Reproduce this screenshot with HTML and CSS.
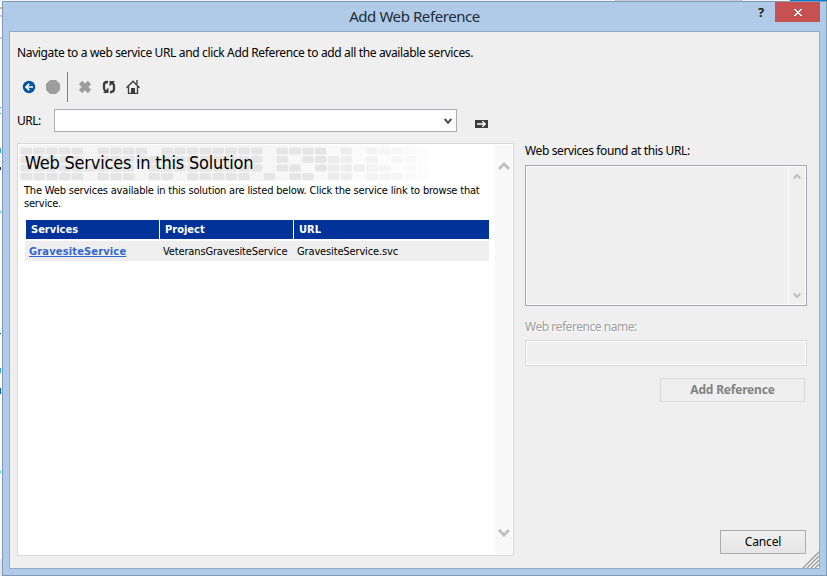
FILE: index.html
```html
<!DOCTYPE html>
<html lang="en">
<head>
    <meta charset="UTF-8">
    <meta name="viewport" content="width=device-width, initial-scale=1.0">
    <title>Add Web Reference</title>
    <link rel="stylesheet" href="styles.css">
</head>
<body>
    <div class="dialog">
        <div class="title-bar">
            <h1 class="title">Add Web Reference</h1>
            <div class="window-buttons">
                <button class="help-button">?</button>
                <button class="close-button">
                    <svg width="8" height="7" viewBox="0 0 8 7" shape-rendering="crispEdges"><path d="M0 0h2v1h1v1h2V1h1V0h2v1H7v1H6v1H5v1h1v1h1v1h1v1H6V6H5V5H3v1H2v1H0V6h1V5h1V4h1V3H2V2H1V1H0z" fill="#fff"/></svg>
                </button>
            </div>
        </div>

        <div class="content">
            <p class="intro">Navigate to a web service URL and click Add Reference to add all the available services.</p>

            <div class="toolbar">
                <svg class="icon" width="14" height="14" viewBox="0 0 14 14"><circle cx="7" cy="7" r="6.2" fill="#0054a0"/><path d="M11 7H4M7.2 3.8L4 7l3.2 3.2" fill="none" stroke="#fff" stroke-width="1.7"/></svg>
                <svg class="icon" width="14" height="14" viewBox="0 0 14 14"><path d="M4 0h6l4 4v6l-4 4H4l-4-4V4z" fill="#9d9d9d"/></svg>
                <span class="separator"></span>
                <svg class="icon" width="14" height="14" viewBox="0 0 14 14"><path d="M2.500 2.500l9 9M11.500 2.500l-9 9" stroke="#9d9d9d" stroke-width="4.600"/></svg>
                <svg class="icon" width="14" height="14" viewBox="0 0 14 14"><path d="M6 2H4.500Q2 2.500 2 5v3.500Q2.200 10.500 4.500 11.500M8 12h1.500Q12 11.500 12 9V5.500Q11.800 3.500 9.500 2.500" fill="none" stroke="#3c3c3c" stroke-width="2.300"/><path d="M1 13h5.500V7.500zM13 1H7.500v5.500z" fill="#3c3c3c"/></svg>
                <svg class="icon" width="14" height="14" viewBox="0 0 14 14"><path d="M.5 7.800L7 1.200l6.500 6.600M2.500 6v7.500h9V6M11 0v4" fill="none" stroke="#3c3c3c" stroke-width="1.300"/><path d="M5 8h4v6H5z" fill="#3c3c3c"/></svg>
            </div>

            <div class="url-row">
                <label class="url-label">URL:</label>
                <div class="url-box">
                    <svg width="8" height="7" viewBox="0 0 8 7"><path d="M.7 1L4 4.800 7.300 1" fill="none" stroke="#4a4a4a" stroke-width="2"/></svg>
                </div>
                <svg class="go" width="13" height="8" viewBox="0 0 13 8"><path d="M0 0h13v8H0z" fill="#3c3c3c"/><path d="M2 4h8M7.300 1.200L10.200 4 7.300 6.800" fill="none" stroke="#fff" stroke-width="1.400"/></svg>
            </div>

            <div class="columns">
                <div class="browser">
                    <div class="page">
                        <div class="banner">
                            <svg class="tiles" width="474" height="36"></svg>
                            <h2 class="banner-title">Web Services in this Solution</h2>
                        </div>
                        <p class="description">The Web services available in this solution are listed below. Click the service link to browse that service.</p>
                        <table class="services">
                            <thead>
                                <tr>
                                    <th class="col-service">Services</th>
                                    <th class="col-project">Project</th>
                                    <th>URL</th>
                                </tr>
                            </thead>
                            <tbody>
                                <tr>
                                    <td><a href="#">GravesiteService</a></td>
                                    <td>VeteransGravesiteService</td>
                                    <td>GravesiteService.svc</td>
                                </tr>
                            </tbody>
                        </table>
                    </div>
                    <div class="scrollbar">
                        <svg width="12" height="10" viewBox="0 0 12 10"><path d="M1 8l5-5 5 5" fill="none" stroke="#bfbfbf" stroke-width="2.800"/></svg>
                        <svg width="12" height="10" viewBox="0 0 12 10"><path d="M1 2l5 5 5-5" fill="none" stroke="#bfbfbf" stroke-width="2.800"/></svg>
                    </div>
                </div>

                <div class="side">
                    <label class="found-label">Web services found at this URL:</label>
                    <div class="found-list">
                        <div class="list-scroll">
                            <svg width="8" height="7" viewBox="0 0 8 7"><path d="M.7 5.500L4 2l3.300 3.500" fill="none" stroke="#bfbfbf" stroke-width="2"/></svg>
                            <svg width="8" height="7" viewBox="0 0 8 7"><path d="M.7 1.500L4 5l3.300-3.500" fill="none" stroke="#bfbfbf" stroke-width="2"/></svg>
                        </div>
                    </div>
                    <label class="name-label">Web reference name:</label>
                    <div class="name-box"></div>
                    <button class="add-button" disabled>Add Reference</button>
                    <button class="cancel-button">Cancel</button>
                </div>
            </div>
            <svg class="grip" width="17" height="17" viewBox="0 0 17 17"><path d="M0 17L17 0v17z" fill="#fff"/><path d="M1 17L17 1M5 17L17 5M9 17L17 9M13 17l4-4" stroke="#999" stroke-width="1.500"/></svg>
        </div>
    </div>

    <script>
        // Rounded tiles behind the page heading, fading out to the right
        const tiles = document.querySelector('.tiles');
        const gaps = [
            [5, 10, 19, 24, 26],
            [5, 19, 21, 26, 28],
            [9, 19, 22, 29],
            [5, 9, 12, 18, 20, 23, 26]
        ];

        for (let row = 0; row < 4; row++) {
            for (let col = 0; col < 32; col++) {
                if (gaps[row].includes(col)) continue;
                const rect = document.createElementNS('http://www.w3.org/2000/svg', 'rect');
                rect.setAttribute('x', 1.5 + col * 12.8);
                rect.setAttribute('y', 2.5 + row * 8.5);
                rect.setAttribute('width', 11.6);
                rect.setAttribute('height', 7);
                rect.setAttribute('rx', 2);
                rect.setAttribute('opacity', col < 24 ? 1 : Math.max(0, 0.65 - (col - 24) / 12));
                tiles.appendChild(rect);
            }
        }
    </script>
</body>
</html>
```
FILE: styles.css
```css
* {
    box-sizing: border-box;
}

/* Slivers of the window behind the dialog show along the top and left edges */
body {
    margin: 0;
    height: 576px;
    padding: 1px 0 0 2px;
    overflow: hidden;
    background:
        linear-gradient(90deg, #f3f3f3 615px, #cbced8 615px, #cbced8 743px, #f3f3f3 743px, #f3f3f3 790px, #0078cc 790px) 0 0 / 827px 1px no-repeat,
        linear-gradient(#e0b870, #e0b870) 0 7px / 2px 2px no-repeat,
        linear-gradient(#c9cbd6, #c9cbd6) 0 15px / 2px 2px no-repeat,
        linear-gradient(#c9cbd6, #c9cbd6) 0 37px / 2px 2px no-repeat,
        linear-gradient(#4d95bd, #4d95bd) 0 107px / 1px 1px no-repeat,
        linear-gradient(#4d95bd, #4d95bd) 0 113px / 1px 1px no-repeat,
        linear-gradient(#2fa5d8, #2fa5d8) 0 148px / 1px 5px no-repeat,
        linear-gradient(#223355, #223355) 0 167px / 1px 3px no-repeat,
        linear-gradient(#4cc2ea, #4cc2ea) 0 211px / 1px 2px no-repeat,
        linear-gradient(#0066b0, #0066b0) 0 333px / 1px 1px no-repeat,
        linear-gradient(#2fa5d8, #2fa5d8) 0 368px / 1px 5px no-repeat,
        linear-gradient(#0066b0, #0066b0) 0 388px / 1px 6px no-repeat,
        linear-gradient(#4cc2ea, #4cc2ea) 0 471px / 1px 2px no-repeat,
        linear-gradient(#e6e6ea, #e6e6ea) 0 559px / 2px 17px no-repeat,
        #fff;
    font-family: "Noto Sans", "Open Sans", sans-serif;
    font-size: 12px;
    color: #000;
}

h1, h2, p {
    margin: 0;
    font-weight: normal;
}

svg {
    display: block;
    flex: none;
}

button {
    font-family: inherit;
    border: none;
    padding: 0;
}

.dialog {
    width: 825px;
    height: 575px;
    padding: 0 6px 6px;
    border: 1px solid #8199b9;
    background: #b0cbe8;
}

.title-bar {
    position: relative;
    height: 29px;
    display: flex;
    justify-content: center;
}

.title {
    font-size: 15px;
    line-height: 29px;
    color: #222b36;
    letter-spacing: -0.42px;
}

.window-buttons {
    position: absolute;
    top: 0;
    right: 0;
    display: flex;
}

.help-button {
    width: 28px;
    height: 20px;
    background: none;
    font-size: 13px;
    font-weight: bold;
    color: #222;
}

.close-button {
    width: 45px;
    height: 20px;
    display: flex;
    align-items: center;
    justify-content: center;
    background: #c75050;
}

.content {
    position: relative;
    height: 538px;
    padding: 13px 12px 12px 7px;
    border: 1px solid #92abca;
    background: #efefef;
}

.intro {
    line-height: 16px;
    letter-spacing: -0.36px;
}

.toolbar {
    display: flex;
    align-items: center;
    gap: 10px;
    height: 30px;
    margin-top: 11px;
    padding-left: 5px;
}

.separator {
    width: 1px;
    height: 30px;
    margin: 0 0 0 -3px;
    background: #808080;
}

.url-row {
    display: flex;
    align-items: center;
    height: 23px;
    margin-top: 7px;
}

.url-label {
    width: 37px;
    letter-spacing: -0.5px;
}

.url-box {
    width: 403px;
    height: 23px;
    display: flex;
    align-items: center;
    justify-content: flex-end;
    padding: 1px 4px 0 0;
    border: 1px solid #abadb3;
    background: #fff;
}

.go {
    margin: 7px 0 0 18px;
}

.columns {
    display: flex;
    gap: 11px;
    height: 413px;
    margin-top: 11px;
}

.browser {
    width: 497px;
    display: flex;
    justify-content: space-between;
    padding: 1px 1px 1px 1px;
    border: 1px solid #d9d9d9;
    background: #fff;
    font-family: "DejaVu Sans Condensed", "DejaVu Sans", sans-serif;
    font-stretch: condensed;
    font-size: 11px;
}

.page {
    width: 474px;
}

.banner {
    position: relative;
    height: 36px;
    background: linear-gradient(90deg, #f5f5f5 230px, #fff 420px);
}

.tiles {
    position: absolute;
    top: 0;
    left: 0;
    fill: #e5e5e5;
}

.banner-title {
    position: relative;
    padding-left: 6px;
    font-size: 18px;
    line-height: 36px;
    letter-spacing: -0.21px;
    white-space: nowrap;
}

.description {
    padding: 3px 8px 0 5px;
    line-height: 13px;
    letter-spacing: -0.19px;
}

.services {
    width: 464px;
    margin: 10px 0 0 6px;
    border-spacing: 0;
    table-layout: fixed;
}

.col-service, .col-project {
    width: 134px;
}

.services th {
    height: 21px;
    padding: 0 0 0 5px;
    background: #003399;
    border: solid #fff;
    border-width: 0 0 2px 1px;
    color: #fff;
    text-align: left;
}

.services td {
    height: 20px;
    padding: 0 0 0 4px;
    background: #eee;
    letter-spacing: -0.14px;
    white-space: nowrap;
}

.services a {
    color: #3366cc;
    font-weight: bold;
    letter-spacing: 0.16px;
}

.scrollbar {
    width: 17px;
    display: flex;
    flex-direction: column;
    justify-content: space-between;
    align-items: center;
    padding: 16px 0;
    background: #f8f8f8;
}

.side {
    width: 282px;
    display: flex;
    flex-direction: column;
}

.found-label, .name-label {
    line-height: 16px;
    letter-spacing: -0.38px;
}

.found-list {
    height: 141px;
    display: flex;
    justify-content: flex-end;
    margin-top: 6px;
    border: 1px solid #a5a6ab;
    box-shadow: inset 0 0 0 1px #fff;
}

.list-scroll {
    width: 18px;
    display: flex;
    flex-direction: column;
    justify-content: space-between;
    align-items: center;
    padding: 7px 2px 6px 0;
    border-left: 1px solid #fff;
}

.name-label {
    margin-top: 13px;
    color: #a0a0a0;
    text-shadow: 1px 1px #fff;
    letter-spacing: -0.46px;
}

.name-box {
    height: 26px;
    margin-top: 5px;
    border: 1px solid #d9d9d9;
    box-shadow: inset 0 0 0 1px #fff;
}

.add-button {
    align-self: flex-end;
    width: 145px;
    height: 24px;
    margin: 12px 2px 0 0;
    padding-bottom: 1px;
    border: 1px solid #d9d9d9;
    background: #efefef;
    color: #838383;
    font-size: 12px;
    font-weight: bold;
    letter-spacing: -0.2px;
}

.cancel-button {
    align-self: flex-end;
    width: 86px;
    height: 24px;
    margin: auto 1px 2px 0;
    padding-bottom: 1px;
    border: 1px solid #acacac;
    background: linear-gradient(#f0f0f0, #e5e5e5);
    color: #000;
    font-size: 12px;
    letter-spacing: -0.15px;
}

.grip {
    position: absolute;
    right: 0;
    bottom: 0;
}
```
